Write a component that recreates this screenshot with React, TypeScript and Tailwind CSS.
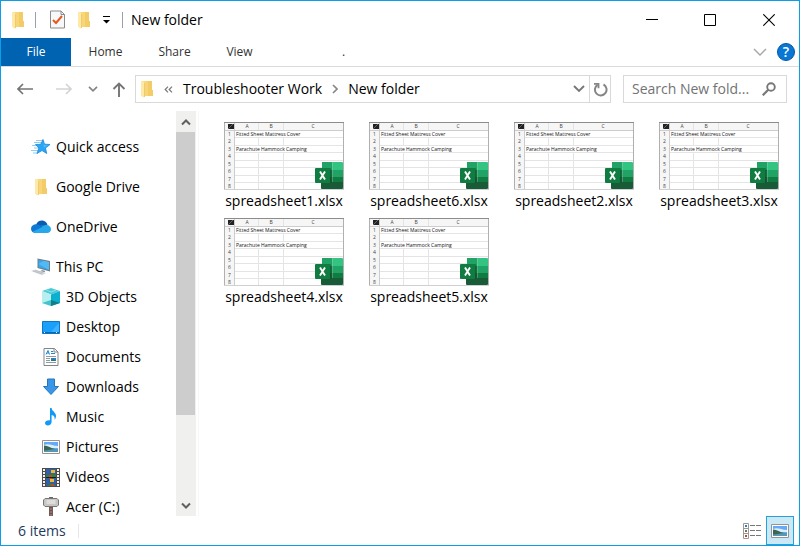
import { useState } from "react";
import type { ReactNode } from "react";

interface NavItem {
  name: string;
  icon: ReactNode;
}

const FILES = [
  "spreadsheet1.xlsx",
  "spreadsheet6.xlsx",
  "spreadsheet2.xlsx",
  "spreadsheet3.xlsx",
  "spreadsheet4.xlsx",
  "spreadsheet5.xlsx",
];

const SHEET_ROWS = [1, 2, 3, 4, 5, 6, 7, 8];

const FolderIcon = () => (
  <svg width="14" height="18" viewBox="0 0 14 18" aria-hidden="true">
    <path d="M3 1h9v9h1v6H3z" fill="#f7d67a" />
    <path d="M8 1h4v9h1v6H8z" fill="#f3cc68" />
    <path d="M1 1h2l2 2v14l-2 .5-2-2z" fill="#ffe9a6" />
    <path d="M4.5 3v14" stroke="#e9bd55" strokeWidth="0.7" />
  </svg>
);

const PropertiesIcon = () => (
  <svg width="15" height="19" viewBox="0 0 15 19" fill="none" aria-hidden="true">
    <path d="M.5 1h10.500l3.500 3.500V18H.5z" fill="#f7f8fa" stroke="#8b8b8b" />
    <path d="M11 1v3.500h3.500" stroke="#8b8b8b" />
    <path d="m3 10 3 3 6-7" stroke="#e8581c" strokeWidth="2" />
  </svg>
);

const StarIcon = () => (
  <svg width="20" height="18" viewBox="0 0 20 18" aria-hidden="true">
    <path d="M5 2.500h6M3 4.500h7M1 7.500h6M3 10h5M0 12.500h7M2 15h4" stroke="#8ccdf5" strokeWidth="1" />
    <path d="m12 1.500 1.500 4.700 5.500.3-4.500 3.500 1.200 5.500-4.700-3L6 15.500l1.900-5.500L4.500 6.500l5.200-.2z" fill="#2ba6f4" stroke="#1a87d8" strokeWidth="0.8" />
    <path d="m12 3 1 4 4 .3-4 2.200z" fill="#55bdfb" />
  </svg>
);

const OneDriveIcon = () => (
  <svg width="20" height="14" viewBox="0 0 20 14" aria-hidden="true">
    <path d="M5 5C6 1.500 9 .3 11.500.6 14 .9 16 2.800 16.500 5L10 8z" fill="#0a5cb0" />
    <path d="M4.500 13C1.500 13 0 11 0 8.800 0 6.300 2 4.500 4.500 4.300 7 4 9 5.200 10.500 6.500L13 9z" fill="#0f78d4" />
    <path d="M9.500 5.800 14 9l2-4.200z" fill="#1490df" />
    <path d="M1.500 11.800 11 7.300l3-2.100c3-1 6 1 6 4 0 2.300-1.700 3.800-4 3.800H4.500c-1.500 0-2.500-.5-3-1.200z" fill="#28a8ea" />
  </svg>
);

const ComputerIcon = () => (
  <svg width="20" height="18" viewBox="0 0 20 18" aria-hidden="true">
    <path d="M6.500.5 19 3v10.500L6.500 10z" fill="#6e7d88" />
    <path d="M7.500 1.800 18 3.900v8.200L7.500 9.200z" fill="#35a7ee" />
    <path d="m7.500 6 5-3.200L18 3.900v8.200z" fill="#68c4fa" opacity=".6" />
    <path d="m11 12 3 .8v1.500l-5-1z" fill="#8e989f" />
    <path d="m0 13 4-1.500L15 15l-4 2.200z" fill="#d5d9dd" />
    <path d="m2 13 9 2.800M4 12.300l8.500 2.600" stroke="#a7afb5" strokeWidth=".6" />
  </svg>
);

const CubeIcon = () => (
  <svg width="18" height="18" viewBox="0 0 18 18" aria-hidden="true">
    <path d="m9 0 9 3-9 3.500L0 3z" fill="#4cc9d4" />
    <path d="m0 3 9 3.500V18l-9-3z" fill="#b7eef0" />
    <path d="m18 3-9 3.500V18l9-3z" fill="#0bb0cf" />
    <path d="m0 15 9-3v6z" fill="#45c3cb" />
    <path d="m9 12 9 3-9 3z" fill="#137d8b" />
    <path d="m4 2 5 2 5-2" stroke="#8be5e8" fill="none" />
  </svg>
);

const DesktopIcon = () => (
  <svg width="18" height="13" viewBox="0 0 18 13" aria-hidden="true">
    <path d="M.5.5h17v12H.5z" fill="#1aa0fb" stroke="#0b76c4" />
    <path d="M8 12 17 2v10z" fill="#3db2ff" />
    <path d="M1 11.500h16" stroke="#0b65ad" />
    <path d="M2 11.500h2M14 11.500h2" stroke="#fff" strokeDasharray="1 1" />
  </svg>
);

const DocumentIcon = () => (
  <svg width="16" height="18" viewBox="0 0 16 18" fill="none" aria-hidden="true">
    <path d="M1 .5h10.500L15 4v13.500H1z" fill="#fff" stroke="#858585" />
    <path d="M11 .5V4h4" stroke="#858585" />
    <path d="m3 6.500 2-4 1.500 4M4 5h2M8 3.500h2M8 5.500h4" stroke="#168bdc" />
    <path d="M3 8.500h10M3 10.500h4M3 12.500h4M3 14.500h10" stroke="#8f9aa3" />
    <path d="M8 10h5v3H8z" fill="#2485cd" />
    <path d="m8 13 2-2 3 2z" fill="#37764d" />
  </svg>
);

const DownloadIcon = () => (
  <svg width="18" height="18" viewBox="0 0 18 18" aria-hidden="true">
    <path d="M5.500 1h7v7.500h4L9 16.500 1.500 8.500h4z" fill="#3a97e8" stroke="#2375bd" />
  </svg>
);

const MusicIcon = () => (
  <svg width="14" height="18" viewBox="0 0 14 18" aria-hidden="true">
    <path d="M6 0h1.600c.3 3.500 4.900 4.300 4.400 8.500-.2 1.500-.8 2.500-1.500 3.300.8-3-1-4.500-2.900-4.800V14c0 2-1.800 3.400-3.800 3.400C2.200 17.400 1 16.500 1 15c0-1.800 2-3 5-2.700z" fill="#119af5" />
  </svg>
);

const PictureIcon = () => (
  <svg width="18" height="14" viewBox="0 0 18 14" aria-hidden="true">
    <path d="M.5.5h17v13H.5z" fill="#fff" stroke="#949494" />
    <path d="M2 2h14v10H2z" fill="#65a9f7" />
    <path d="M2 5c5-2 8 1 14 1v2H2z" fill="#d9effa" />
    <path d="M2 5.500c4 0 7 3 11 3.500l3 1v2H2z" fill="#3c6650" />
    <path d="M2 10.500c5 0 8-2 14-1.500v3H2z" fill="#5798b4" />
  </svg>
);

const VideoIcon = () => (
  <svg width="18" height="19" viewBox="0 0 18 19" aria-hidden="true">
    <path d="M0 0h18v19H0z" fill="#4c4c4c" />
    <path d="M2 1v18M16 1v18" stroke="#f4f4f4" strokeWidth="2" strokeDasharray="2 1" />
    <path d="M4 1h10v8H4zM4 10h10v8H4z" fill="#315fa8" />
    <path d="M9 2h4v3H9zM8 11h4v3H8z" fill="#e9ba2d" />
    <path d="M4 7h4l2-2 4 2v2H4zM6 17l3-2 4 2v1H6z" fill="#377e36" />
    <path d="M7 7h3v4H7zM9 16h3v2H9z" fill="#c34729" />
    <path d="M4 9.500h10" stroke="#1b1b1b" />
  </svg>
);

const HammerIcon = () => (
  <svg width="18" height="20" viewBox="0 0 18 20" aria-hidden="true">
    <path d="M7.500 9h3v11h-3z" fill="#744c48" stroke="#4b3d3b" strokeWidth=".7" />
    <path d="M8 12h2M8 15h2M8 18h2" stroke="#bd8d86" />
    <path d="M7 0h4v2H7z" fill="#666" />
    <path d="m3 1.500 12 0 1.500 1.500v5L15 9.500H3L1.500 8V3z" fill="#c7c6c3" stroke="#777" />
    <path d="M4.500 3h9v4h-9z" fill="#dedddb" />
  </svg>
);

const ExcelLogo = () => (
  <g>
    <path d="M98 40h10.500v8H98z" fill="#21a366" />
    <path d="M108.500 40H118a1 1 0 0 1 1 1v7h-10.500z" fill="#33c481" />
    <path d="M97 48h11.500v7H97z" fill="#107c41" />
    <path d="M108.500 48H119v7h-10.500z" fill="#21a366" />
    <path d="M97 55h11.500v6H97z" fill="#185c37" />
    <path d="M108.500 55H119v6h-10.500z" fill="#107c41" />
    <path d="M97 60h22v6a1 1 0 0 1-1 1H98a1 1 0 0 1-1-1z" fill="#185c37" />
    <path d="M97 46h9a1.500 1.500 0 0 1 1.500 1.500V61H97z" fill="#0b4d2b" opacity=".5" />
    <rect x="91" y="46" width="15" height="15" rx="1" fill="#107c41" />
    <path d="m96 49.500 5 8M101 49.500l-5 8" stroke="#fff" strokeWidth="1.900" />
  </g>
);

const SheetThumbnail = () => (
  <svg
    width="120"
    height="68"
    viewBox="0 0 120 68"
    className="font-['Open_Sans',sans-serif] text-[5px]"
    aria-hidden="true"
  >
    <path d="M0 0h120v68H0z" fill="#fff" />
    <path d="M0 0h120v8H0zM0 8h11v60H0z" fill="#f6f6f6" />
    <path d="M34.500 0v68M59.500 0v68M11 15.500h109M11 23.500h109M11 30.500h109M11 38.500h109M11 45.500h109M11 53.500h109M11 60.500h109" stroke="#e4e4e4" />
    <path d="M12 9h63v6H12zM12 24h68v6H12z" fill="#fff" />
    <path d="M0 8.500h120M10.500 0v68" stroke="#cdcdcd" />
    <path d="M.5 68V.5h119V68" fill="none" stroke="#b0b0b0" />
    <path d="M0 .5h120" stroke="#8c8c8c" />
    <path d="M0 67.500h120" stroke="#d0d0d0" />
    <path d="M4 2h6v5H4z" fill="#222" />
    <path d="m4 7 5-5" stroke="#666" />
    <g fill="#444" textAnchor="middle">
      <text x="23" y="6">A</text>
      <text x="47" y="6">B</text>
      <text x="89" y="6">C</text>
      {SHEET_ROWS.map((row) => (
        <text key={row} x="5.500" y={6 + row * 7.500}>
          {row}
        </text>
      ))}
    </g>
    <g fill="#111">
      <text x="12" y="14">Fitted Sheet Mattress Cover</text>
      <text x="12" y="29">Parachute Hammock Camping</text>
    </g>
    <ExcelLogo />
  </svg>
);

const ROOTS: NavItem[] = [
  { name: "Quick access", icon: <StarIcon /> },
  { name: "Google Drive", icon: <FolderIcon /> },
  { name: "OneDrive", icon: <OneDriveIcon /> },
];

const PC_FOLDERS: NavItem[] = [
  { name: "3D Objects", icon: <CubeIcon /> },
  { name: "Desktop", icon: <DesktopIcon /> },
  { name: "Documents", icon: <DocumentIcon /> },
  { name: "Downloads", icon: <DownloadIcon /> },
  { name: "Music", icon: <MusicIcon /> },
  { name: "Pictures", icon: <PictureIcon /> },
  { name: "Videos", icon: <VideoIcon /> },
  { name: "Acer (C:)", icon: <HammerIcon /> },
];

const TitleBar = () => (
  <header className="flex h-[37px] shrink-0 items-center pl-2.5">
    <FolderIcon />
    <span className="ml-2.5 h-4 w-px bg-gray-400" />
    <button aria-label="Properties" className="ml-3.5">
      <PropertiesIcon />
    </button>
    <button aria-label="New folder" className="ml-3">
      <FolderIcon />
    </button>
    <button aria-label="Customize toolbar" className="ml-3">
      <svg width="7" height="8" viewBox="0 0 7 8">
        <path d="M0 .5h7" stroke="#000" />
        <path d="M0 4h7L3.500 7.500z" />
      </svg>
    </button>
    <span className="ml-3 h-4 w-px bg-gray-400" />
    <h1 className="ml-2 flex-1 text-sm text-black">New folder</h1>
    <div className="flex h-full">
      <button aria-label="Minimize" className="flex w-[58px] items-center justify-center">
        <svg width="12" height="12" viewBox="0 0 12 12">
          <path d="M0 5.500h12" stroke="#000" />
        </svg>
      </button>
      <button aria-label="Maximize" className="flex w-[58px] items-center justify-center">
        <svg width="12" height="12" viewBox="0 0 12 12" fill="none">
          <path d="M.5.5h11v11H.5z" stroke="#000" />
        </svg>
      </button>
      <button aria-label="Close" className="flex w-[60px] items-center justify-center">
        <svg width="12" height="12" viewBox="0 0 12 12" fill="none">
          <path d="m.3.3 11.400 11.400m0-11.400L.3 11.700" stroke="#000" strokeWidth="1.100" />
        </svg>
      </button>
    </div>
  </header>
);

const Ribbon = () => (
  <div className="flex h-[29px] shrink-0 items-stretch border-b border-[#dadbdc] text-xs text-[#333]">
    <button className="w-[70px] bg-[#0063b1] text-white">File</button>
    <button className="w-[69px]">Home</button>
    <button className="w-[69px]">Share</button>
    <button className="w-[61px]">View</button>
    <span className="ml-[72px] self-center">.</span>
    <span className="flex-1" />
    <button aria-label="Expand ribbon" className="mr-2.5">
      <svg width="14" height="8" viewBox="0 0 14 8" fill="none">
        <path d="m1 1 6 6 6-6" stroke="#a6a6a6" strokeWidth="1.400" />
      </svg>
    </button>
    <button
      aria-label="Help"
      className="mr-1 flex size-[18px] items-center justify-center self-center rounded-full border border-[#0558a5] bg-[#0878d4] text-sm font-semibold text-white"
    >
      ?
    </button>
  </div>
);

const AddressRow = () => {
  const [query, setQuery] = useState("");

  return (
    <div className="flex h-11 shrink-0 items-center pr-3 pl-4">
      <button aria-label="Back">
        <svg width="16" height="12" viewBox="0 0 16 12" fill="none">
          <path d="M6 1 1 6l5 5M1 6h15" stroke="#757575" strokeWidth="1.700" />
        </svg>
      </button>
      <button aria-label="Forward" className="ml-[23px]">
        <svg width="16" height="12" viewBox="0 0 16 12" fill="none">
          <path d="m10 1 5 5-5 5M15 6H0" stroke="#d4d4d4" strokeWidth="1.700" />
        </svg>
      </button>
      <button aria-label="Recent locations" className="ml-4">
        <svg width="10" height="6" viewBox="0 0 10 6" fill="none">
          <path d="m1 .8 4 4 4-4" stroke="#858585" strokeWidth="1.700" />
        </svg>
      </button>
      <button aria-label="Up" className="ml-3.5">
        <svg width="14" height="15" viewBox="0 0 14 15" fill="none">
          <path d="m1.500 7 5.500-5.500L12.500 7M7 1.500V15" stroke="#757575" strokeWidth="1.900" />
        </svg>
      </button>
      <nav
        aria-label="Address"
        className="ml-[9px] flex h-7 flex-1 items-center border border-[#d9d9d9] pl-1 text-sm text-black"
      >
        <FolderIcon />
        <svg className="ml-2.5" width="9" height="7" viewBox="0 0 9 7" fill="none" aria-hidden="true">
          <path d="m4 .7-2.800 2.800L4 6.300M8 .7 5.200 3.500 8 6.300" stroke="#777" strokeWidth="1.200" />
        </svg>
        <a href="#work" className="ml-2.5">Troubleshooter Work</a>
        <svg className="mx-2.5" width="6" height="10" viewBox="0 0 6 10" fill="none" aria-hidden="true">
          <path d="m1 1 4 4-4 4" stroke="#858585" strokeWidth="1.600" />
        </svg>
        <a href="#folder">New folder</a>
        <span className="flex-1" />
        <button aria-label="Previous locations" className="mr-1">
          <svg width="12" height="8" viewBox="0 0 12 8" fill="none">
            <path d="m1 1 5 5 5-5" stroke="#777" strokeWidth="1.900" />
          </svg>
        </button>
        <button
          aria-label="Refresh"
          className="flex h-full w-[21px] items-center justify-center border-l border-[#d9d9d9]"
        >
          <svg width="15" height="15" viewBox="0 0 15 15" fill="none">
            <path d="M4.500 2.800A5.800 5.800 0 1 0 10.500 2.500" stroke="#858585" strokeWidth="2" />
            <path d="M1 1.800h4.500v4.500" stroke="#858585" strokeWidth="1.800" />
          </svg>
        </button>
      </nav>
      <label className="ml-3 flex h-7 w-[164px] items-center border border-[#d9d9d9] pr-2.5 pl-2">
        <input
          aria-label="Search New folder"
          className="min-w-0 flex-1 text-sm text-black outline-none placeholder:text-[#737373]"
          placeholder="Search New fold..."
          value={query}
          onChange={(e) => setQuery(e.target.value)}
        />
        <svg width="14" height="14" viewBox="0 0 14 14" fill="none" aria-hidden="true">
          <circle cx="9" cy="5" r="3.800" stroke="#777" strokeWidth="1.900" />
          <path d="M6.300 7.700.7 13.300" stroke="#777" strokeWidth="2.200" />
        </svg>
      </label>
    </div>
  );
};

const Sidebar = () => (
  <aside className="flex w-[198px] shrink-0 border-r border-[#f7f7f7]">
    <ul className="flex-1 overflow-hidden pt-4 text-sm text-black">
      {ROOTS.map((item) => (
        <li key={item.name} className="flex h-10 items-center pl-[30px]">
          <span className="flex w-5 justify-center">{item.icon}</span>
          <a href="#root-folder" className="ml-[5px]">{item.name}</a>
        </li>
      ))}
      <li>
        <div className="flex h-10 items-center pl-[30px]">
          <span className="flex w-5 justify-center">
            <ComputerIcon />
          </span>
          <a href="#pc" className="ml-[5px]">This PC</a>
        </div>
        <ul className="-mt-[5px]">
          {PC_FOLDERS.map((item) => (
            <li key={item.name} className="flex h-[30px] items-center pl-10">
              <span className="flex w-5 justify-center">{item.icon}</span>
              <a href="#pc-folder" className="ml-[5px]">{item.name}</a>
            </li>
          ))}
        </ul>
      </li>
    </ul>
    <div className="flex w-5 shrink-0 flex-col bg-[#f0f0ee]">
      <button aria-label="Scroll up" className="flex h-[21px] items-center justify-center">
        <svg width="10" height="8" viewBox="0 0 10 8" fill="none">
          <path d="m1 6.500 4-4 4 4" stroke="#606060" strokeWidth="2" />
        </svg>
      </button>
      <div className="mr-px h-3/4 max-h-[283px] bg-[#cdcdcd]" />
      <span className="flex-1" />
      <button aria-label="Scroll down" className="flex h-[21px] items-center justify-center">
        <svg width="10" height="8" viewBox="0 0 10 8" fill="none">
          <path d="m1 1.500 4 4 4-4" stroke="#606060" strokeWidth="2" />
        </svg>
      </button>
    </div>
    <span className="w-0.5" />
  </aside>
);

const FileGrid = () => (
  <main className="flex flex-1 flex-wrap content-start gap-x-[25px] gap-y-1.5 overflow-hidden pt-[11px] pl-[25px]">
    {FILES.map((file) => (
      <figure key={file} className="w-[120px]">
        <SheetThumbnail />
        <figcaption className="text-center text-sm leading-[22px] text-black">
          {file}
        </figcaption>
      </figure>
    ))}
  </main>
);

const StatusBar = () => (
  <footer className="flex h-[29px] shrink-0 items-center pr-[5px] pl-[17px] text-sm text-[#1e395b]">
    <span>{FILES.length} items</span>
    <span className="ml-3 h-3.5 w-px bg-gray-200" />
    <span className="flex-1" />
    <button aria-label="Details view" className="mr-[5px]">
      <svg width="18" height="16" viewBox="0 0 18 16" fill="none">
        <path d="M.5.5h5v15h-5zM.5 5.500h5M.5 10.500h5" fill="#fff" stroke="#9a9a9a" />
        <path d="M2 3h2" stroke="#357abd" strokeWidth="2" />
        <path d="M2 8h2" stroke="#7a7350" strokeWidth="2" />
        <path d="M2 13h2" stroke="#c0471e" strokeWidth="2" />
        <path d="M7 2.500h5M13 2.500h5M7 7.500h5M13 7.500h5M7 12.500h5M13 12.500h5" stroke="#777" />
      </svg>
    </button>
    <button
      aria-label="Large icons view"
      className="flex h-full w-7 items-center justify-center border border-[#26a0da] bg-[#cbe8f6]"
    >
      <PictureIcon />
    </button>
  </footer>
);

const App = () => (
  <div className="flex h-screen flex-col border border-[#0a9fe8] bg-white font-['Open_Sans',sans-serif]">
    <TitleBar />
    <Ribbon />
    <AddressRow />
    <div className="flex min-h-0 flex-1">
      <Sidebar />
      <FileGrid />
    </div>
    <StatusBar />
  </div>
);

export default App;
